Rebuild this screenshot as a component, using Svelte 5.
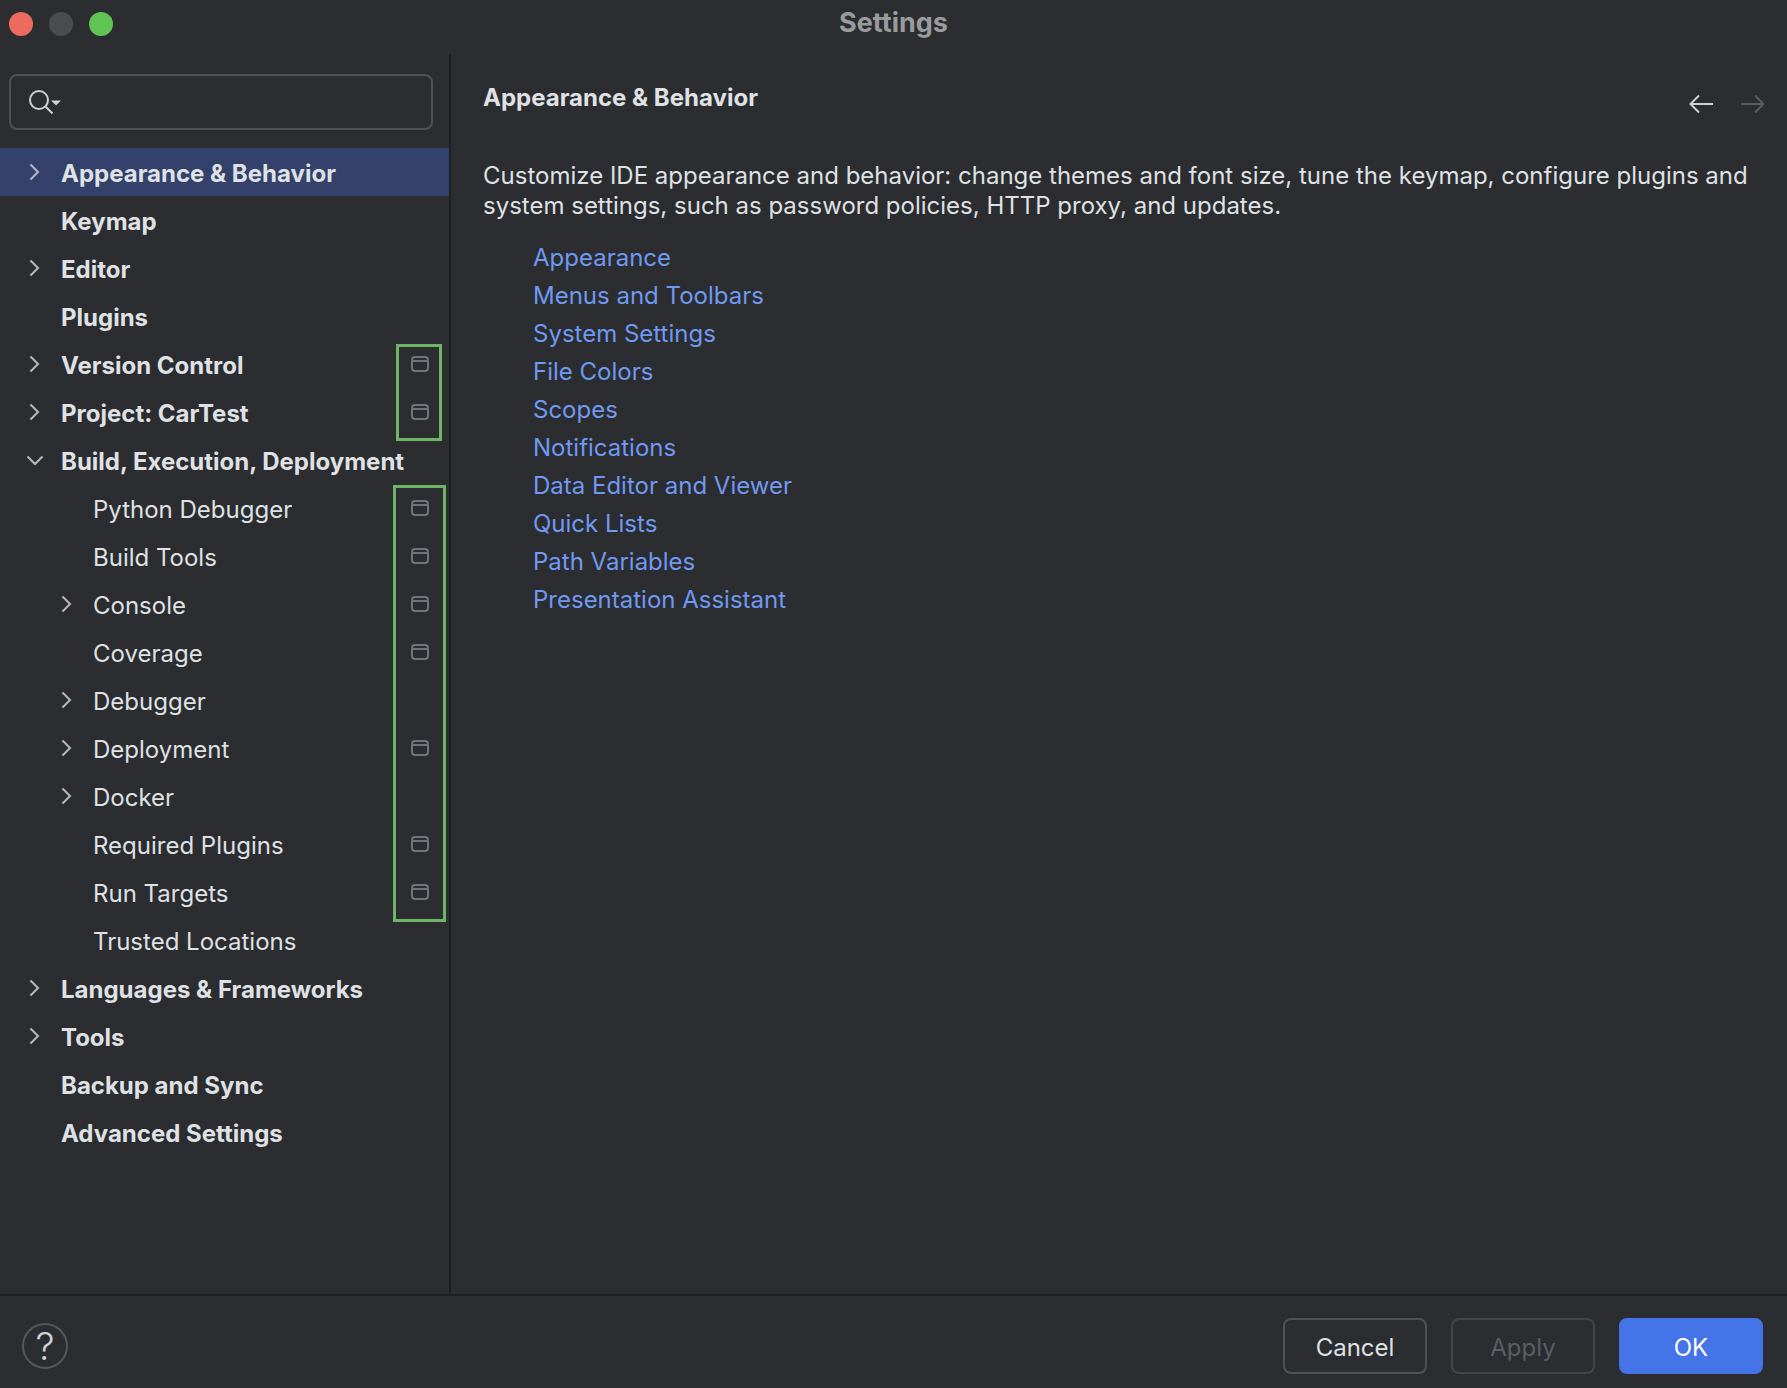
<script>
	const tree = [
		{ name: 'Appearance & Behavior', top: true, arrow: 'right' },
		{ name: 'Keymap', top: true },
		{ name: 'Editor', top: true, arrow: 'right' },
		{ name: 'Plugins', top: true },
		{ name: 'Version Control', top: true, arrow: 'right', project: true },
		{ name: 'Project: CarTest', top: true, arrow: 'right', project: true },
		{ name: 'Build, Execution, Deployment', top: true, arrow: 'down' },
		{ name: 'Python Debugger', project: true },
		{ name: 'Build Tools', project: true },
		{ name: 'Console', arrow: 'right', project: true },
		{ name: 'Coverage', project: true },
		{ name: 'Debugger', arrow: 'right' },
		{ name: 'Deployment', arrow: 'right', project: true },
		{ name: 'Docker', arrow: 'right' },
		{ name: 'Required Plugins', project: true },
		{ name: 'Run Targets', project: true },
		{ name: 'Trusted Locations' },
		{ name: 'Languages & Frameworks', top: true, arrow: 'right' },
		{ name: 'Tools', top: true, arrow: 'right' },
		{ name: 'Backup and Sync', top: true },
		{ name: 'Advanced Settings', top: true }
	];

	const links = [
		'Appearance',
		'Menus and Toolbars',
		'System Settings',
		'File Colors',
		'Scopes',
		'Notifications',
		'Data Editor and Viewer',
		'Quick Lists',
		'Path Variables',
		'Presentation Assistant'
	];

	let selected = $state(0);
	let query = $state('');
</script>

<div class="window">
	<header class="titlebar">
		<div class="lights">
			<button class="light close" aria-label="Close"></button>
			<button class="light minimize" aria-label="Minimize" disabled></button>
			<button class="light zoom" aria-label="Zoom"></button>
		</div>
		<div class="title">Settings</div>
	</header>

	<div class="body">
		<aside class="sidebar">
			<div class="search">
				<button class="history" aria-label="Search history">
					<svg width="34" height="26" viewBox="0 0 34 26" fill="none">
						<circle cx="11" cy="11" r="9" stroke="#ced0d6" stroke-width="2" />
						<path d="M17.5 17.5L24.5 24.5" stroke="#ced0d6" stroke-width="2" />
						<path d="M23 11.5H33L28 16.5Z" fill="#ced0d6" />
					</svg>
				</button>
				<input type="text" aria-label="Search settings" bind:value={query} />
			</div>

			<nav class="tree" aria-label="Settings categories">
				{#each tree as item, i}
					<button
						class="row"
						class:top={item.top}
						class:selected={selected === i}
						onclick={() => (selected = i)}>
						<svg class="arrow" width="32" height="32" viewBox="0 0 32 32" fill="none">
							{#if item.arrow === 'right'}
								<path d="M11.5 8.5L19 16L11.5 23.5" stroke="#b4b8bf" stroke-width="2" />
							{:else if item.arrow === 'down'}
								<path d="M8.5 12.5L16 20L23.5 12.5" stroke="#b4b8bf" stroke-width="2" />
							{/if}
						</svg>
						<span class="name">{item.name}</span>
						{#if item.project}
							<svg class="project" width="18" height="16" viewBox="0 0 18 16" fill="none">
								<rect x="1" y="1" width="16" height="14" rx="3" stroke="#6f737a" stroke-width="2" />
								<path d="M1 5H17" stroke="#6f737a" stroke-width="2" />
							</svg>
						{/if}
					</button>
				{/each}
				<div class="mark mark-project"></div>
				<div class="mark mark-build"></div>
			</nav>
		</aside>

		<main class="content">
			<div class="heading">
				<h1>Appearance &amp; Behavior</h1>
				<div class="history-nav">
					<button aria-label="Back">
						<svg width="24" height="20" viewBox="0 0 24 20" fill="none">
							<path d="M24 10H2M10 1.5L1.5 10L10 18.5" stroke="#ced0d6" stroke-width="2" />
						</svg>
					</button>
					<button aria-label="Forward" disabled>
						<svg width="24" height="20" viewBox="0 0 24 20" fill="none">
							<path d="M0 10H22M14 1.5L22.5 10L14 18.5" stroke="#5a5b5e" stroke-width="2" />
						</svg>
					</button>
				</div>
			</div>
			<p>
				Customize IDE appearance and behavior: change themes and font size, tune the keymap,
				configure plugins and system settings, such as password policies, HTTP proxy, and updates.
			</p>
			<ul>
				{#each links as link}
					<li><a href="#settings">{link}</a></li>
				{/each}
			</ul>
		</main>
	</div>

	<footer>
		<button class="help" aria-label="Help">?</button>
		<div class="actions">
			<button class="action">Cancel</button>
			<button class="action" disabled>Apply</button>
			<button class="action primary">OK</button>
		</div>
	</footer>
</div>

<style>
	:global(body) {
		margin: 0;
		background: #2b2d30;
	}

	.window {
		display: flex;
		flex-direction: column;
		min-height: 100vh;
		background: #2b2d30;
		color: #dfe1e5;
		font-family: Inter, sans-serif;
		font-size: 24px;
		line-height: 30px;
	}

	button {
		padding: 0;
		border: none;
		background: none;
		color: inherit;
		font: inherit;
	}

	svg {
		display: block;
		flex: none;
	}

	.titlebar {
		display: grid;
		grid-template-columns: 1fr auto 1fr;
		align-items: center;
		height: 48px;
		padding: 0 9px 6px;
	}

	.lights {
		display: flex;
		gap: 16px;
	}

	.light {
		width: 24px;
		height: 24px;
		border-radius: 50%;
	}

	.close {
		background: #ed6a5e;
	}

	.minimize {
		background: #4b4c4e;
	}

	.zoom {
		background: #61c554;
	}

	.title {
		padding-bottom: 2px;
		color: #9a9b9d;
		font-size: 27px;
		font-weight: 700;
	}

	.body {
		display: flex;
		flex: 1;
	}

	.sidebar {
		flex: none;
		width: 449px;
		border-right: 2px solid #1e1f22;
	}

	.search {
		display: flex;
		align-items: center;
		box-sizing: border-box;
		height: 56px;
		margin: 20px 16px 18px 9px;
		padding-left: 17px;
		border: 2px solid #4e5157;
		border-radius: 8px;
	}

	.search input {
		flex: 1;
		min-width: 0;
		height: 48px;
		padding: 0 8px;
		border: none;
		outline: none;
		background: none;
		color: inherit;
		font: inherit;
	}

	.tree {
		position: relative;
	}

	.row {
		display: flex;
		align-items: center;
		box-sizing: border-box;
		width: 100%;
		height: 48px;
		padding: 0 20px 0 51px;
		text-align: left;
		white-space: nowrap;
	}

	.row.top {
		padding-left: 19px;
		font-weight: 700;
	}

	.row.selected {
		background: #33416b;
	}

	.name {
		flex: 1;
		padding: 4px 0 0 10px;
	}

	/* frames around the project-level icons */
	.mark {
		position: absolute;
		box-sizing: border-box;
		border: 3px solid #6cb665;
		pointer-events: none;
	}

	.mark-project {
		top: 196px;
		right: 7px;
		width: 46px;
		height: 97px;
	}

	.mark-build {
		top: 337px;
		right: 3px;
		width: 53px;
		height: 437px;
	}

	.content {
		flex: 1;
		padding: 29px 22px 28px 32px;
	}

	.heading {
		display: flex;
		justify-content: space-between;
	}

	h1 {
		margin: 0;
		font-size: 24px;
		font-weight: 700;
	}

	.history-nav {
		display: flex;
		gap: 28px;
		padding-top: 11px;
	}

	p {
		margin: 47px 0 0;
	}

	ul {
		margin: 22px 0 0;
		padding-left: 50px;
		list-style: none;
	}

	li {
		height: 38px;
	}

	a {
		color: #7099f0;
		text-decoration: none;
	}

	footer {
		display: flex;
		justify-content: space-between;
		align-items: center;
		padding: 22px 24px 14px 22px;
		border-top: 2px solid #1e1f22;
	}

	.help {
		box-sizing: border-box;
		width: 46px;
		height: 46px;
		border: 2px solid #55575b;
		border-radius: 50%;
		color: #ced0d6;
		font-size: 38px;
		font-weight: 300;
	}

	.actions {
		display: flex;
		gap: 24px;
	}

	.action {
		box-sizing: border-box;
		width: 144px;
		height: 56px;
		padding-top: 4px;
		border: 2px solid #4e5157;
		border-radius: 8px;
	}

	.action:disabled {
		border-color: #43454a;
		color: #5a5d63;
	}

	.primary {
		border-color: #4574e8;
		background: #4574e8;
		color: #fff;
	}
</style>
